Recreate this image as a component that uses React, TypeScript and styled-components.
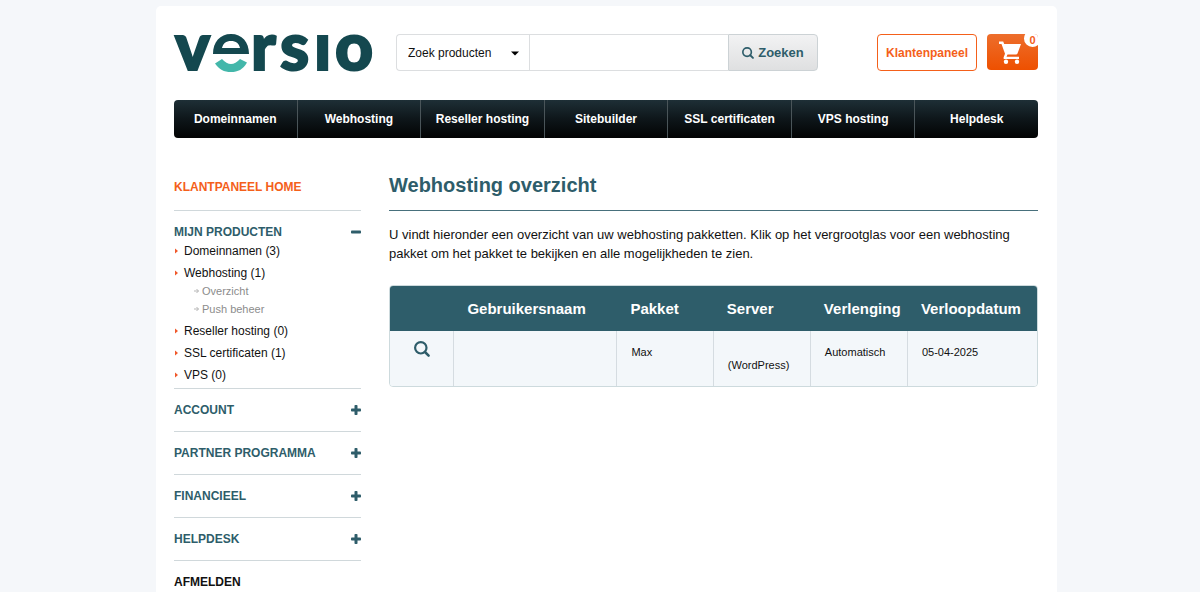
import React from 'react';
import styled, { createGlobalStyle } from 'styled-components';

const teal = '#2e5d6a';
const orange = '#f4601a';
const line = '#d0d8db';

const GlobalStyle = createGlobalStyle`
  * { box-sizing: border-box; }
  body {
    margin: 0;
    background: #f5f7fa;
    color: #111;
    font-family: "Liberation Sans", Arial, sans-serif;
    font-size: 12px;
  }
  a { color: inherit; text-decoration: none; }
  ul { list-style: none; margin: 0; padding: 0; }
`;

const Page = styled.div`
  padding: 6px 143px 0 156px;
`;

const Card = styled.div`
  min-height: calc(100vh - 6px);
  padding: 28px 19px 0 18px;
  background: #fff;
  border-radius: 5px 5px 0 0;
`;

const Header = styled.header`
  display: flex;
  align-items: flex-start;
  height: 66px;
`;

const LogoLink = styled.a`
  display: block;
  width: 200px;
  height: 40px;
  margin-right: 22px;
  svg { display: block; overflow: visible; }
`;

const Search = styled.form`
  display: flex;
  width: 422px;
  height: 37px;
`;

const SelectWrap = styled.label`
  position: relative;
  flex: none;
  width: 133px;
  svg { position: absolute; right: 10px; top: 17px; pointer-events: none; }
`;

const Select = styled.select`
  appearance: none;
  width: 100%;
  height: 100%;
  padding: 1px 11px 0;
  border: 1px solid #dcdee0;
  border-right: 0;
  border-radius: 4px 0 0 4px;
  background: #fff;
  color: #111;
  font: inherit;
`;

const SearchInput = styled.input`
  flex: 1;
  min-width: 0;
  padding: 0 10px;
  border: 1px solid #dcdee0;
  border-right: 0;
  background: #fff;
  font: inherit;
`;

const SearchButton = styled.button`
  display: flex;
  align-items: center;
  justify-content: center;
  gap: 4px;
  width: 90px;
  border: 1px solid #ccd2d5;
  border-radius: 0 4px 4px 0;
  background: linear-gradient(#f2f2f3, #dfe0e1);
  color: ${teal};
  font: bold 13px "Liberation Sans", Arial, sans-serif;
`;

const Actions = styled.div`
  display: flex;
  gap: 10px;
  margin-left: auto;
`;

const PanelLink = styled.a`
  width: 100px;
  height: 37px;
  border: 1px solid ${orange};
  border-radius: 4px;
  color: ${orange};
  font-weight: bold;
  line-height: 36px;
  text-align: center;
`;

const CartLink = styled.a`
  position: relative;
  width: 51px;
  height: 36px;
  padding: 7px 0 0 12px;
  overflow: hidden;
  border-radius: 4px;
  background: linear-gradient(#ed6e2c, #ee5000);
  svg { display: block; }
`;

const CartCount = styled.span`
  position: absolute;
  top: -4px;
  right: -3px;
  width: 17px;
  height: 17px;
  border-radius: 9px;
  background: #fff;
  color: ${orange};
  font-size: 11px;
  font-weight: bold;
  line-height: 20px;
  text-align: center;
`;

const Nav = styled.nav`
  display: flex;
  height: 38px;
  overflow: hidden;
  border-radius: 4px;
  background: linear-gradient(#1e2f36, #0e161a 50%, #020303);
`;

const NavLink = styled.a`
  flex: 1;
  color: #fff;
  font-weight: bold;
  line-height: 38px;
  text-align: center;
  & + & { border-left: 1px solid #4a5559; }
`;

const Columns = styled.div`
  display: flex;
  gap: 28px;
  padding-top: 28px;
`;

const Sidebar = styled.aside`
  flex: none;
  width: 187px;
`;

const MenuSection = styled.section`
  border-bottom: 1px solid ${line};
  &:first-child { padding-bottom: 2px; }
  &:last-child { border-bottom: 0; }
`;

const MenuHeading = styled.a<{ $tone?: string; $open?: boolean }>`
  display: flex;
  align-items: center;
  justify-content: space-between;
  height: ${p => (p.$open ? 31 : 42)}px;
  padding-top: ${p => (p.$open ? 10 : 0)}px;
  color: ${p => p.$tone ?? teal};
  font-weight: bold;
  line-height: 20px;
`;

const MenuList = styled.ul`
  display: grid;
  gap: 4px;
  padding-bottom: 4px;
`;

const MenuItem = styled.li`
  line-height: 18px;
`;

const ItemLink = styled.a`
  display: flex;
  align-items: center;
  gap: 6px;
  padding-left: 1px;
`;

const SubLink = styled(ItemLink)`
  gap: 3px;
  padding-left: 20px;
  color: #8c8c8c;
  font-size: 11px;
`;

const Content = styled.main`
  flex: 1;
  min-width: 0;
`;

const Title = styled.h1`
  margin: 0 0 14px;
  padding: 7px 0 13px;
  border-bottom: 1px solid #48707c;
  color: ${teal};
  font-size: 20px;
  line-height: 24px;
`;

const Intro = styled.p`
  margin: 0 0 22px;
  font-size: 13px;
  line-height: 19px;
`;

const Table = styled.table`
  width: 100%;
  table-layout: fixed;
  overflow: hidden;
  border: 1px solid #cddadd;
  border-radius: 4px;
  border-spacing: 0;
`;

const Th = styled.th`
  height: 45px;
  padding: 0 0 0 14px;
  background: ${teal};
  color: #fff;
  font-size: 15px;
  text-align: left;
  white-space: nowrap;
`;

const Td = styled.td`
  height: 55px;
  padding: 15px 0 0 14px;
  border-left: 1px solid #d5dce1;
  background: #f3f7fa;
  font-size: 11px;
  line-height: 13px;
  vertical-align: top;
  &:first-child { border-left: 0; padding: 10px 0 0 24px; }
`;

const SearchIcon = ({ size }: { size: number }) => (
  <svg width={size} height={size} viewBox="0 0 16 16" fill="none" stroke={teal} strokeWidth="2.2" aria-hidden="true">
    <circle cx="6.8" cy="6.8" r="5.7" />
    <path d="M11 11l3.600 3.600" strokeWidth="2.500" strokeLinecap="round" />
  </svg>
);

const Logo = () => (
  <svg width="200" height="40" viewBox="0 0 200 40" fill="#14484f" fontFamily="Lato" fontWeight="900" fontSize="66" aria-hidden="true">
    <g stroke="#14484f" strokeWidth="2">
      <text x="1" y="36">v</text>
      <text x="77" y="36">r</text>
      <text x="106" y="36">s</text>
      <text x="140" y="36">ı</text>
      <text x="161" y="36">o</text>
    </g>
    <path fillRule="evenodd" d="M39 20C39 8 46 0 57 0S75 8 75 20ZM48 14H66C65 9.500 62 7 57 7S49 9.500 48 14Z" />
    <path d="M41 29.500L48 25Q57 35 66 25L73 28.500C69 35.500 64 38 57 38S45 35.500 41 29.500Z" fill="#43b7aa" />
  </svg>
);

const Toggle = ({ open }: { open?: boolean }) => (
  <svg width="10" height="10" viewBox="0 0 10 10" fill={teal} aria-hidden="true">
    <rect y="3.500" width="10" height="3" rx="0.800" />
    {!open && <rect x="3.500" width="3" height="10" rx="0.800" />}
  </svg>
);

const Bullet = () => (
  <svg width="3" height="6" viewBox="0 0 3 6" fill="#f0592b" aria-hidden="true">
    <path d="M0 0.500L3 3L0 5.500Z" />
  </svg>
);

const SubArrow = () => (
  <svg width="5" height="6" viewBox="0 0 5 6" fill="none" stroke="#b5b5b5" aria-hidden="true">
    <path d="M0 3H4.500M2.500 1L4.500 3L2.500 5" />
  </svg>
);

const navItems = ['Domeinnamen', 'Webhosting', 'Reseller hosting', 'Sitebuilder', 'SSL certificaten', 'VPS hosting', 'Helpdesk'];

const products = [
  { label: 'Domeinnamen (3)' },
  { label: 'Webhosting (1)', children: ['Overzicht', 'Push beheer'] },
  { label: 'Reseller hosting (0)' },
  { label: 'SSL certificaten (1)' },
  { label: 'VPS (0)' },
];

const sections = ['ACCOUNT', 'PARTNER PROGRAMMA', 'FINANCIEEL', 'HELPDESK'];

export default function App() {
  return (
    <>
      <GlobalStyle />
      <Page>
        <Card>
          <Header>
            <LogoLink href="#" aria-label="Versio"><Logo /></LogoLink>
            <Search>
              <SelectWrap>
                <Select aria-label="Zoek in">
                  <option>Zoek producten</option>
                </Select>
                <svg width="8" height="5" viewBox="0 0 8 5" aria-hidden="true"><path d="M0 0.500H8L4 4.500Z" /></svg>
              </SelectWrap>
              <SearchInput type="text" aria-label="Zoekterm" />
              <SearchButton type="button"><SearchIcon size={12} />Zoeken</SearchButton>
            </Search>
            <Actions>
              <PanelLink href="#">Klantenpaneel</PanelLink>
              <CartLink href="#" aria-label="Winkelwagen">
                <svg width="23" height="24" viewBox="0 0 23 24" fill="#fff" aria-hidden="true">
                  <path d="M0 0.500H4.200L5.200 3H22L18.500 12.500Q18 13.500 17 13.500H8.500L7.500 15.800H20V18H5.500Q4 18 4.700 16.300L6 12.700L2.500 3H0Z" />
                  <circle cx="7" cy="20.800" r="2.200" />
                  <circle cx="18" cy="20.800" r="2.200" />
                </svg>
                <CartCount>0</CartCount>
              </CartLink>
            </Actions>
          </Header>

          <Nav>
            {navItems.map(item => <NavLink href="#" key={item}>{item}</NavLink>)}
          </Nav>

          <Columns>
            <Sidebar>
              <MenuSection>
                <MenuHeading href="#" $tone={orange}>KLANTPANEEL HOME</MenuHeading>
              </MenuSection>
              <MenuSection>
                <MenuHeading href="#" $open>MIJN PRODUCTEN<Toggle open /></MenuHeading>
                <MenuList>
                  {products.map(product => (
                    <MenuItem key={product.label}>
                      <ItemLink href="#"><Bullet />{product.label}</ItemLink>
                      {product.children && (
                        <ul>
                          {product.children.map(child => (
                            <li key={child}><SubLink href="#"><SubArrow />{child}</SubLink></li>
                          ))}
                        </ul>
                      )}
                    </MenuItem>
                  ))}
                </MenuList>
              </MenuSection>
              {sections.map(section => (
                <MenuSection key={section}>
                  <MenuHeading href="#">{section}<Toggle /></MenuHeading>
                </MenuSection>
              ))}
              <MenuSection>
                <MenuHeading href="#" $tone="#111">AFMELDEN</MenuHeading>
              </MenuSection>
            </Sidebar>

            <Content>
              <Title>Webhosting overzicht</Title>
              <Intro>
                U vindt hieronder een overzicht van uw webhosting pakketten. Klik op het vergrootglas voor een webhosting
                pakket om het pakket te bekijken en alle mogelijkheden te zien.
              </Intro>
              <Table>
                <colgroup>
                  <col style={{ width: '9.8%' }} />
                  <col style={{ width: '25.2%' }} />
                  <col style={{ width: '14.9%' }} />
                  <col style={{ width: '15%' }} />
                  <col style={{ width: '15%' }} />
                  <col />
                </colgroup>
                <thead>
                  <tr>
                    <Th aria-label="Bekijken" />
                    <Th>Gebruikersnaam</Th>
                    <Th>Pakket</Th>
                    <Th>Server</Th>
                    <Th>Verlenging</Th>
                    <Th>Verloopdatum</Th>
                  </tr>
                </thead>
                <tbody>
                  <tr>
                    <Td><a href="#" aria-label="Bekijk pakket"><SearchIcon size={16} /></a></Td>
                    <Td />
                    <Td>Max</Td>
                    <Td><br />(WordPress)</Td>
                    <Td>Automatisch</Td>
                    <Td>05-04-2025</Td>
                  </tr>
                </tbody>
              </Table>
            </Content>
          </Columns>
        </Card>
      </Page>
    </>
  );
}
